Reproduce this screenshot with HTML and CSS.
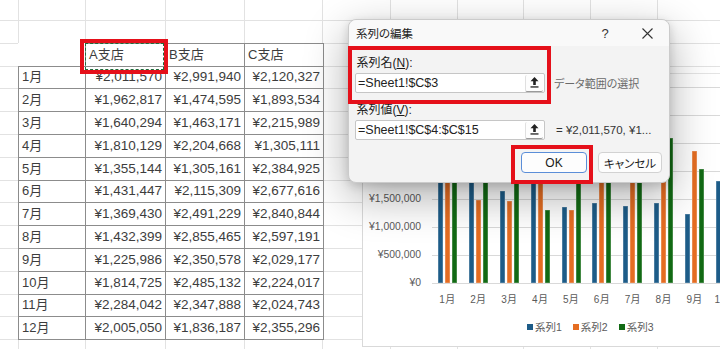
FILE: index.html
```html
<!DOCTYPE html>
<html lang="ja">
<head>
<meta charset="utf-8">
<title>系列の編集</title>
<link rel="stylesheet" href="styles.css">
</head>
<body>
<div class="sheet">
  <table class="data">
    <colgroup><col class="c1"><col class="c2"><col class="c3"><col class="c4"></colgroup>
    <thead>
      <tr><th class="corner"></th><th>A支店</th><th>B支店</th><th>C支店</th></tr>
    </thead>
    <tbody>
      <tr><td class="m">1月</td><td>¥2,011,570</td><td>¥2,991,940</td><td>¥2,120,327</td></tr>
      <tr><td class="m">2月</td><td>¥1,962,817</td><td>¥1,474,595</td><td>¥1,893,534</td></tr>
      <tr><td class="m">3月</td><td>¥1,640,294</td><td>¥1,463,171</td><td>¥2,215,989</td></tr>
      <tr><td class="m">4月</td><td>¥1,810,129</td><td>¥2,204,668</td><td>¥1,305,111</td></tr>
      <tr><td class="m">5月</td><td>¥1,355,144</td><td>¥1,305,161</td><td>¥2,384,925</td></tr>
      <tr><td class="m">6月</td><td>¥1,431,447</td><td>¥2,115,309</td><td>¥2,677,616</td></tr>
      <tr><td class="m">7月</td><td>¥1,369,430</td><td>¥2,491,229</td><td>¥2,840,844</td></tr>
      <tr><td class="m">8月</td><td>¥1,432,399</td><td>¥2,855,465</td><td>¥2,597,191</td></tr>
      <tr><td class="m">9月</td><td>¥1,225,986</td><td>¥2,350,578</td><td>¥2,029,177</td></tr>
      <tr><td class="m">10月</td><td>¥1,814,725</td><td>¥2,485,132</td><td>¥2,224,017</td></tr>
      <tr><td class="m">11月</td><td>¥2,284,042</td><td>¥2,347,888</td><td>¥2,024,743</td></tr>
      <tr><td class="m">12月</td><td>¥2,005,050</td><td>¥1,836,187</td><td>¥2,355,296</td></tr>
    </tbody>
  </table>

  <div class="ants"></div>
  <div class="callout callout-a"></div>

  <div class="chart">
    <div class="chart-body">
      <div class="yaxis">
        <span>¥3,500,000</span><span>¥3,000,000</span><span>¥2,500,000</span><span>¥2,000,000</span>
        <span>¥1,500,000</span><span>¥1,000,000</span><span>¥500,000</span><span>¥0</span>
      </div>
      <div class="plot">
        <div class="cat"><i class="bar s1" style="height:112.6px"></i><i class="bar s2" style="height:167.5px"></i><i class="bar s3" style="height:118.7px"></i></div>
        <div class="cat"><i class="bar s1" style="height:109.9px"></i><i class="bar s2" style="height:82.6px"></i><i class="bar s3" style="height:106.0px"></i></div>
        <div class="cat"><i class="bar s1" style="height:91.9px"></i><i class="bar s2" style="height:81.9px"></i><i class="bar s3" style="height:124.1px"></i></div>
        <div class="cat"><i class="bar s1" style="height:101.4px"></i><i class="bar s2" style="height:123.5px"></i><i class="bar s3" style="height:73.1px"></i></div>
        <div class="cat"><i class="bar s1" style="height:75.9px"></i><i class="bar s2" style="height:73.1px"></i><i class="bar s3" style="height:133.6px"></i></div>
        <div class="cat"><i class="bar s1" style="height:80.2px"></i><i class="bar s2" style="height:118.5px"></i><i class="bar s3" style="height:149.9px"></i></div>
        <div class="cat"><i class="bar s1" style="height:76.7px"></i><i class="bar s2" style="height:139.5px"></i><i class="bar s3" style="height:159.1px"></i></div>
        <div class="cat"><i class="bar s1" style="height:80.2px"></i><i class="bar s2" style="height:159.9px"></i><i class="bar s3" style="height:145.4px"></i></div>
        <div class="cat"><i class="bar s1" style="height:68.7px"></i><i class="bar s2" style="height:131.6px"></i><i class="bar s3" style="height:113.6px"></i></div>
        <div class="cat"><i class="bar s1" style="height:101.6px"></i><i class="bar s2" style="height:139.2px"></i><i class="bar s3" style="height:124.5px"></i></div>
        <div class="cat"><i class="bar s1" style="height:127.9px"></i><i class="bar s2" style="height:131.5px"></i><i class="bar s3" style="height:113.4px"></i></div>
        <div class="cat"><i class="bar s1" style="height:112.3px"></i><i class="bar s2" style="height:102.8px"></i><i class="bar s3" style="height:131.9px"></i></div>
      </div>
    </div>
    <div class="xaxis">
      <span>1月</span><span>2月</span><span>3月</span><span>4月</span><span>5月</span><span>6月</span>
      <span>7月</span><span>8月</span><span>9月</span><span>10月</span><span>11月</span><span>12月</span>
    </div>
    <div class="legend">
      <span class="key"><i class="sw s1"></i>系列1</span>
      <span class="key"><i class="sw s2"></i>系列2</span>
      <span class="key"><i class="sw s3"></i>系列3</span>
    </div>
  </div>

  <div class="dialog">
    <div class="titlebar">
      <span class="title">系列の編集</span>
      <span class="tb-btn help">?</span>
      <span class="tb-btn close">
        <svg width="11" height="11" viewBox="0 0 11 11"><path d="M0.5 0.5 L10.5 10.5 M10.5 0.5 L0.5 10.5" stroke="#333" stroke-width="1.1" fill="none"/></svg>
      </span>
    </div>
    <div class="dlg-body">
      <div class="lbl">系列名(<u>N</u>):</div>
      <div class="field">
        <div class="input"><span class="val">=Sheet1!$C$3</span><span class="pick"><svg width="9" height="11" viewBox="0 0 9 11"><path d="M4.5 0 L0.5 4.2 H3.2 V8 H5.8 V4.2 H8.5 Z" fill="#222"/><rect x="0.5" y="9.3" width="8" height="1.3" fill="#222"/></svg></span></div>
        <span class="hint">データ範囲の選択</span>
      </div>
      <div class="lbl lbl2">系列値(<u>V</u>):</div>
      <div class="field">
        <div class="input"><span class="val">=Sheet1!$C$4:$C$15</span><span class="pick"><svg width="9" height="11" viewBox="0 0 9 11"><path d="M4.5 0 L0.5 4.2 H3.2 V8 H5.8 V4.2 H8.5 Z" fill="#222"/><rect x="0.5" y="9.3" width="8" height="1.3" fill="#222"/></svg></span></div>
        <span class="preview">= ¥2,011,570, ¥1...</span>
      </div>
      <div class="buttons">
        <span class="btn ok">OK</span>
        <span class="btn cancel">キャンセル</span>
      </div>
    </div>
  </div>

  <div class="callout callout-name"></div>
  <div class="callout callout-ok"></div>
</div>
</body>
</html>
```

FILE: styles.css
```css
* { box-sizing: border-box; }
html, body { margin: 0; padding: 0; overflow: hidden; }
body {
  width: 720px;
  height: 349px;
  background: #fff;
  font-family: "Liberation Sans", "Noto Sans CJK JP", sans-serif;
}

.sheet {
  position: relative;
  width: 720px;
  height: 349px;
  overflow: hidden;
  padding: 42.8px 0 0 18px;
  background-color: #fff;
  background-image:
    linear-gradient(#e2e2e2, #e2e2e2), linear-gradient(#e2e2e2, #e2e2e2),
    linear-gradient(#e2e2e2, #e2e2e2), linear-gradient(#e2e2e2, #e2e2e2),
    linear-gradient(#e2e2e2, #e2e2e2), linear-gradient(#e2e2e2, #e2e2e2),
    linear-gradient(#e2e2e2, #e2e2e2), linear-gradient(#e2e2e2, #e2e2e2),
    linear-gradient(#e2e2e2, #e2e2e2), linear-gradient(#e2e2e2, #e2e2e2),
    repeating-linear-gradient(to bottom, transparent 0 20px, #e2e2e2 20px 21px, transparent 21px 22.8px);
  background-size:
    1px 100%, 1px 100%, 1px 100%, 1px 100%, 1px 100%,
    1px 100%, 1px 100%, 1px 100%, 1px 100%, 1px 100%, 100% 100%;
  background-position:
    18px 0, 85px 0, 165px 0, 244px 0, 322px 0,
    390px 0, 457px 0, 523px 0, 590px 0, 657px 0, 0 0;
  background-repeat: no-repeat;
}

/* data table */
.data {
  border-collapse: collapse;
  table-layout: fixed;
  width: 305px;
  font-size: 13.5px;
  color: #3d3d3d;
  background: #fff;
}
.data col.c1 { width: 67px; }
.data col.c2 { width: 80px; }
.data col.c3 { width: 79px; }
.data col.c4 { width: 79px; }
.data th, .data td {
  height: 22.8px;
  padding: 0 3px 0 3px;
  border: 1px solid #8c8c8c;
  line-height: 20px;
  white-space: nowrap;
  font-weight: normal;
  text-align: right;
}
.data th { text-align: left; font-size: 13px; }
.data th.corner { border: none; background: transparent; }
.data td.m { text-align: left; font-size: 13px; }

/* selection marks */
.ants {
  position: absolute;
  left: 85px;
  top: 43px;
  width: 79px;
  height: 27px;
  border: 1.5px dashed #1f6b3a;
}
.callout {
  position: absolute;
  border: 4px solid #e5101a;
}
.callout-a { left: 80px; top: 39px; width: 88px; height: 35px; }
.callout-name { left: 348px; top: 46px; width: 203px; height: 58px; }
.callout-ok { left: 511px; top: 145px; width: 82px; height: 39px; }

/* chart */
.chart {
  position: absolute;
  left: 362px;
  top: 73px;
  width: 380px;
  height: 274px;
  background: #fff;
  border-left: 1px solid #d9d9d9;
  border-top: 1px solid #e4e4e4;
  border-bottom: 1px solid #d9d9d9;
  padding-top: 13px;
  color: #5a5a5a;
}
.chart-body {
  display: flex;
  align-items: flex-start;
  height: 197px;
}
.yaxis {
  flex: none;
  width: 69px;
  margin-top: -14px;
  padding-right: 11px;
  display: flex;
  flex-direction: column;
  align-items: flex-end;
  font-size: 10.4px;
}
.yaxis span { height: 28px; line-height: 28px; white-space: nowrap; }
.plot {
  flex: none;
  width: 372px;
  height: 197px;
  padding-bottom: 1px;
  display: flex;
  align-items: flex-end;
  background: repeating-linear-gradient(to bottom, #d9d9d9 0 1px, transparent 1px 28px);
}
.cat {
  flex: none;
  width: 30.9px;
  display: flex;
  justify-content: center;
  align-items: flex-end;
  gap: 2px;
}
.bar {
  display: block;
  width: 5px;
  box-shadow: inset 0 0 0 0.6px rgba(255, 255, 255, 0.35);
}
.s1 { background: #1d5c88; }
.s2 { background: #e56d22; }
.s3 { background: #126a14; }

.xaxis {
  display: flex;
  padding-left: 69px;
  margin-top: 9px;
  font-size: 10px;
  line-height: 14px;
  letter-spacing: 0.3px;
}
.xaxis span { flex: none; width: 30.9px; text-align: center; }

.legend {
  display: flex;
  gap: 11px;
  padding-left: 164px;
  margin-top: 13px;
  font-size: 10.5px;
  line-height: 14px;
}
.key { display: flex; align-items: center; }
.sw { display: block; width: 6px; height: 6px; margin-right: 2px; }

/* dialog */
.dialog {
  position: absolute;
  left: 348px;
  top: 19px;
  width: 322px;
  height: 164px;
  background: #f3f3f3;
  border: 1px solid #cbcbcb;
  border-radius: 8px;
  box-shadow: 0 14px 44px rgba(0, 0, 0, 0.32), 0 3px 10px rgba(0, 0, 0, 0.14);
  color: #1b1b1b;
  font-feature-settings: "palt";
  display: flex;
  flex-direction: column;
}
.titlebar {
  height: 26px;
  flex: none;
  display: flex;
  align-items: center;
  padding-left: 7px;
  background: #f9f9f9;
  border-radius: 8px 8px 0 0;
  font-size: 11.5px;
}
.title { flex: 1; color: #222; }
.tb-btn {
  height: 26px;
  display: flex;
  align-items: center;
  justify-content: center;
}
.help { width: 40px; font-size: 13px; color: #333; }
.close { width: 44px; }

.dlg-body { padding: 10px 7px 0 6px; }
.lbl {
  height: 14px;
  line-height: 14px;
  font-size: 12px;
  padding-left: 1.5px;
  white-space: nowrap;
}
.lbl u { text-underline-offset: 1px; }
.lbl2 { margin-top: 10px; }
.field {
  display: flex;
  align-items: center;
  height: 20px;
  margin-top: 3px;
  white-space: nowrap;
}
.input {
  flex: none;
  width: 190px;
  height: 20px;
  display: flex;
  align-items: center;
  padding: 0 1px 0 2px;
  background: #fff;
  border: 1px solid #c6c6c6;
  border-radius: 2px;
  font-size: 12.5px;
  color: #222;
}
.input .val { flex: 1; }
.pick {
  width: 18px;
  height: 17px;
  display: flex;
  align-items: center;
  justify-content: center;
  background: #fdfdfd;
  border-left: 1px solid #e0e0e0;
  border-bottom: 1px solid #9a9a9a;
  border-radius: 2px;
}
.hint { margin-left: 9px; font-size: 11px; color: #6a6a6a; }
.preview { margin-left: 11px; font-size: 11.5px; color: #333; }

.buttons {
  display: flex;
  justify-content: flex-end;
  gap: 11px;
  margin-top: 12px;
}
.btn {
  height: 21px;
  display: flex;
  align-items: center;
  justify-content: center;
  background: #fdfdfd;
  border: 1px solid #d2d2d2;
  border-radius: 4px;
  font-size: 12px;
  color: #1b1b1b;
}
.ok { width: 66px; border-color: #5b8ed8; }
.cancel { width: 64px; font-size: 11.5px; }
```
